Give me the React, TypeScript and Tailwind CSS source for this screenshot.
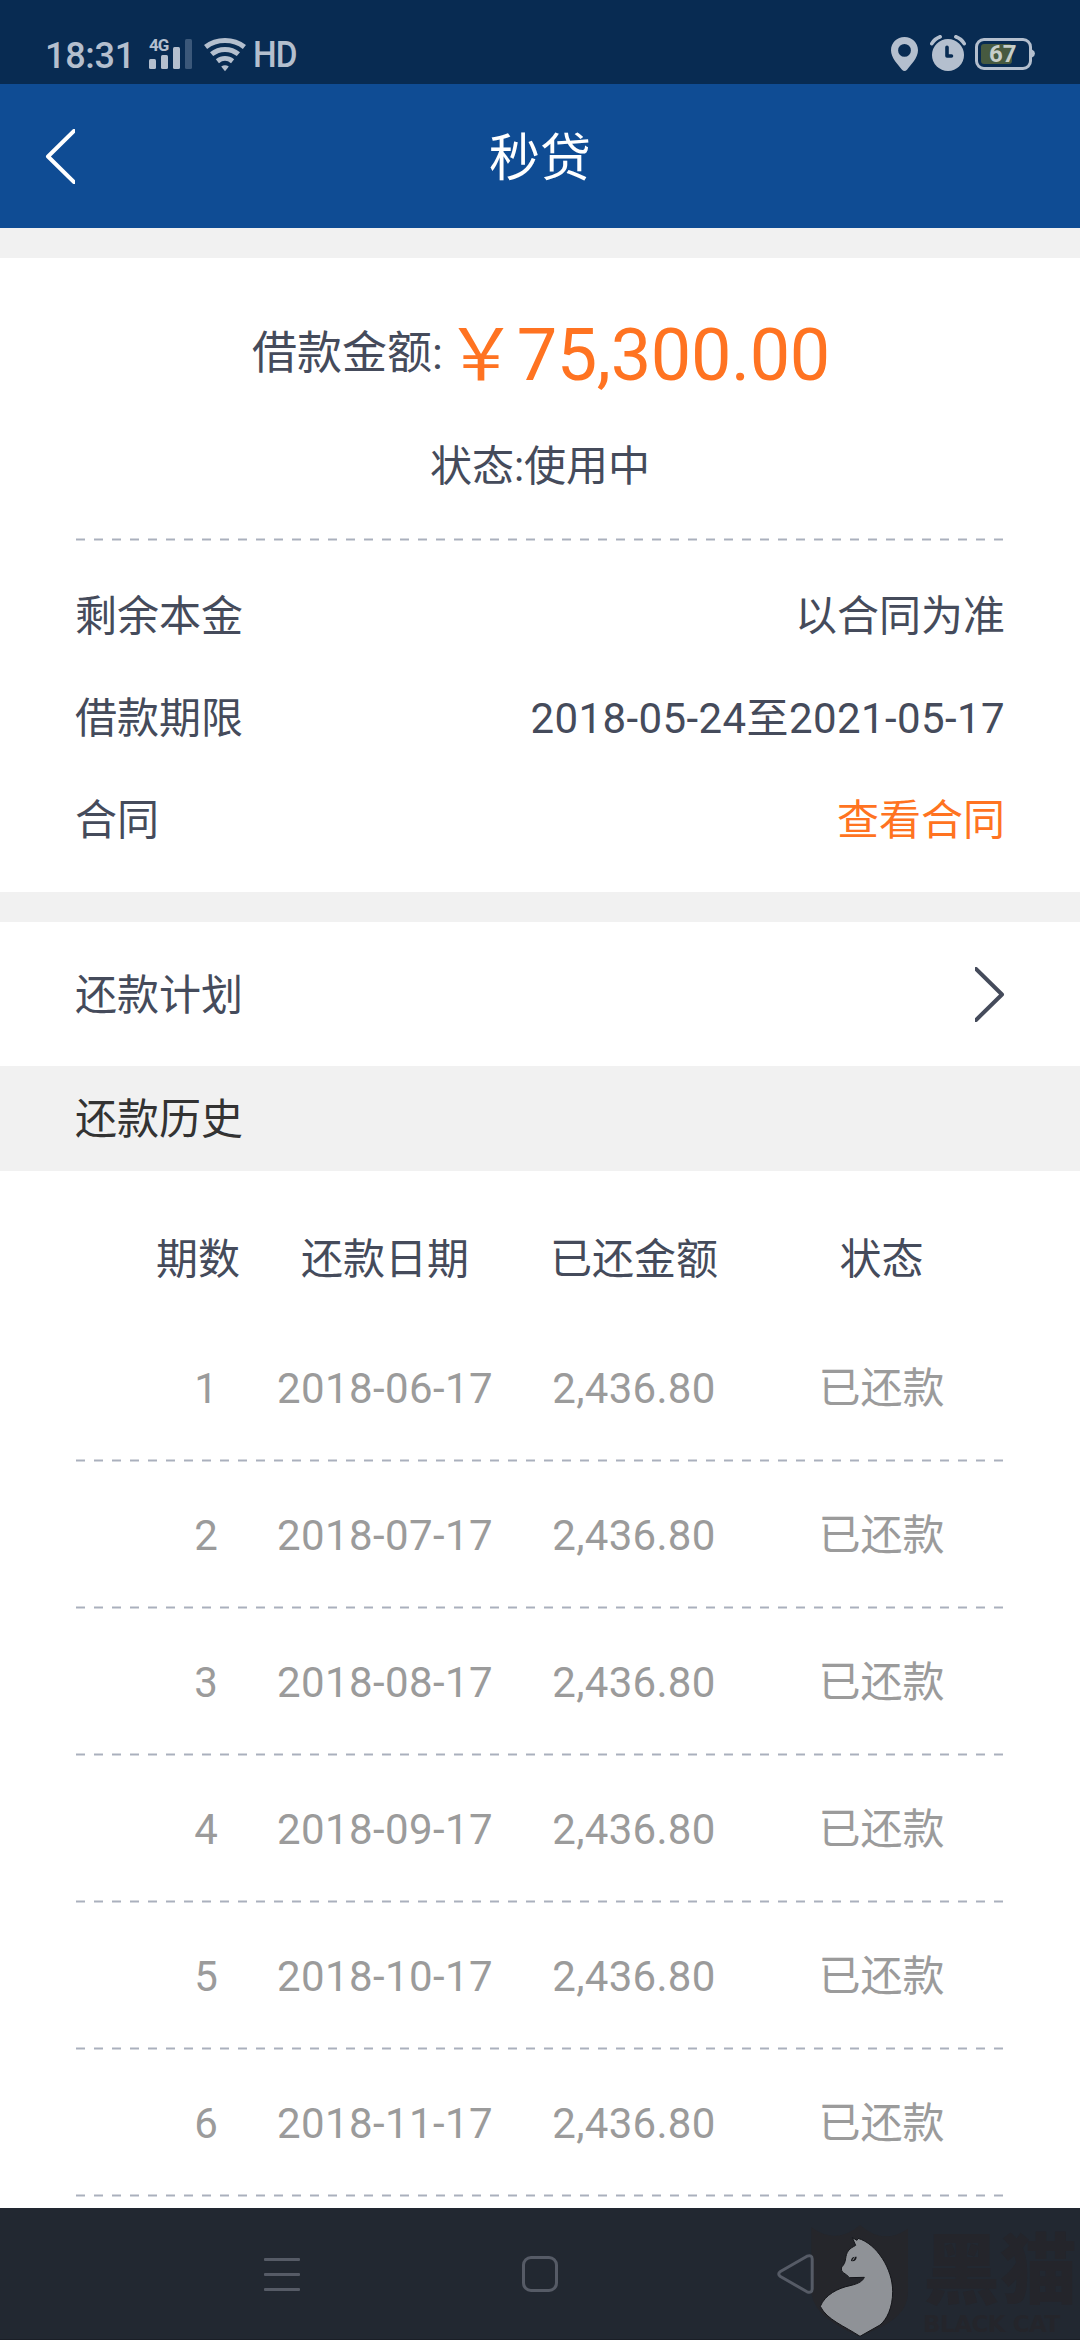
import React from "react";

const history = [
  { no: 1, date: "2018-06-17", amount: "2,436.80", status: "已还款" },
  { no: 2, date: "2018-07-17", amount: "2,436.80", status: "已还款" },
  { no: 3, date: "2018-08-17", amount: "2,436.80", status: "已还款" },
  { no: 4, date: "2018-09-17", amount: "2,436.80", status: "已还款" },
  { no: 5, date: "2018-10-17", amount: "2,436.80", status: "已还款" },
  { no: 6, date: "2018-11-17", amount: "2,436.80", status: "已还款" },
];

// 9px dash, 9px gap, soft top and bottom edge
function Dashed() {
  const dash =
    "h-px bg-[repeating-linear-gradient(90deg,var(--c)_0_9px,transparent_9px_18px)]";
  return (
    <div className="ml-px w-[928px]">
      <div className={`${dash} [--c:#d5d8de]`} />
      <div className={`${dash} [--c:#aab0bd]`} />
      <div className={`${dash} [--c:#d5d8de]`} />
    </div>
  );
}

function StatusBar() {
  return (
    <div className="flex h-[84px] shrink-0 items-start justify-between bg-[#082b52] pl-[45px] pr-[45px] text-[#b4bfce]">
      <div className="flex">
        <div className="mt-[35px] w-[104px] text-[36px] font-medium leading-[42px] tracking-[-0.3px]">18:31</div>
        <div className="relative mt-[39px] h-[30px] w-[55px]">
          <span className="absolute left-0 -top-[2px] text-[17px] font-bold leading-4 tracking-[-1px]">4G</span>
          <svg width="44" height="30" viewBox="0 0 44 30" fill="currentColor">
            <rect x="0" y="20" width="7" height="10" rx="1.5" />
            <rect x="12" y="16" width="7" height="14" rx="1.5" />
            <rect x="24" y="8" width="7" height="22" rx="1.5" />
            <rect x="36" y="0" width="7" height="30" rx="1.5" fill="#3b587a" />
          </svg>
        </div>
        <svg className="mt-[37px]" width="42" height="35" viewBox="0 0 42 35" fill="none" stroke="currentColor" strokeWidth="5">
          <path d="M1.600 10C12.500 1.300 29.500 1.300 40.400 10" />
          <path d="M7.600 17.200C15.300 10.800 26.700 10.800 34.400 17.200" />
          <path d="M13.400 24.200C18 20.500 24 20.500 28.600 24.200" />
          <path d="M17.200 29.500Q21 27 24.800 29.500L21 34.300Z" fill="currentColor" stroke="none" />
        </svg>
        <div className="ml-[7px] mt-[34px] origin-left scale-x-[0.9] text-[37px] font-medium leading-[42px] tracking-[-1px]">HD</div>
      </div>
      <div className="flex">
        <svg className="mt-[37px]" width="27" height="34" viewBox="0 0 27 34" fill="currentColor" fillRule="evenodd">
          <path d="M13.500 0C6 0 0 5.800 0 13.200C0 21 7 27.500 11 32.700Q13.500 35.200 16 32.700C20 27.500 27 21 27 13.200C27 5.800 21 0 13.500 0ZM13.500 7A6.400 6.400 0 1 1 13.500 19.800A6.400 6.400 0 1 1 13.500 7Z" />
        </svg>
        <svg className="ml-3 mt-[35px]" width="36" height="36" viewBox="0 0 36 36" fill="none">
          <circle cx="18" cy="20" r="16" fill="currentColor" />
          <path d="M1.800 8.600Q4.500 4 10.200 1.800M25.800 1.800Q31.500 4 34.200 8.600" stroke="currentColor" strokeWidth="3.600" strokeLinecap="round" />
          <path d="M17 12.300V21H21.500" stroke="#082b52" strokeWidth="3.600" strokeLinecap="round" strokeLinejoin="round" />
        </svg>
        <div className="relative ml-[9px] mt-[38px] h-8 w-[60px]">
          <svg width="60" height="32" viewBox="0 0 60 32" fill="none">
            <rect x="1.500" y="1.500" width="54" height="29" rx="7.500" stroke="currentColor" strokeWidth="3" />
            <path d="M57 11.500Q60 13 60 15.500Q60 18 57 19.500Z" fill="currentColor" />
            <rect x="6" y="6" width="31" height="20" rx="3" fill="#475a40" />
          </svg>
          <span className="absolute left-[14px] top-[2px] text-[24px] font-bold leading-7 text-[#c6cec9]">67</span>
        </div>
      </div>
    </div>
  );
}

function BottomBar() {
  return (
    <div className="relative flex h-[132px] shrink-0 border-b border-[#1a1e26] bg-[#222831] text-[#565b66]">
      <svg className="ml-[264px] mt-[50px]" width="36" height="33" viewBox="0 0 36 33" fill="currentColor">
        <rect width="36" height="3" rx="1" />
        <rect y="15" width="36" height="3" rx="1" />
        <rect y="30" width="36" height="3" rx="1" />
      </svg>
      <div className="ml-[222px] mt-12 size-9 rounded-[9px] border-[3px] border-[#565b66]" />
      <svg className="relative z-10 ml-[219px] mt-[46px]" width="37" height="40" viewBox="0 0 37 40" fill="none" stroke="currentColor" strokeWidth="3" strokeLinejoin="round">
        <path d="M3 17.800L30 2.200Q35 0.500 35.200 5V35Q35 39.500 30 37.800L3 22.200Q0.500 20 3 17.800Z" />
      </svg>
      {/* watermark */}
      <div className="absolute bottom-0 right-0 flex h-[116px] w-[270px] text-[#24252b]">
        <svg className="shrink-0" width="100" height="115" viewBox="150 130 300 345">
          <path d="M154 143Q230 198 300 136Q370 198 444 147V335C444 410 375 440 300 470C225 440 154 395 154 330Z" fill="#25262b" />
          <path d="M277 174L291 182L294 176C350 192 398 268 398 335C398 385 380 420 360 436L300 470C255 440 200 420 181 380C195 345 235 325 270 318C300 311 308 303 313 293L268 294C258 280 240 280 245 262C260 248 254 235 262 218C268 206 278 203 287 197Z" fill="#8f9297" stroke="#15161a" strokeWidth="3" />
          <path d="M273 244Q273 230 290 231Q289 247 273 244Z" fill="#15161a" />
          <path d="M278 242L284 233" stroke="#8f9297" strokeWidth="3" />
        </svg>
        <div className="ml-[13px] flex flex-col">
          <div className="mt-[3px] h-[78px] whitespace-nowrap font-['Noto_Sans_CJK_SC',sans-serif] text-[77px] font-black leading-[78px]">黑猫</div>
          <div className="mt-[6px] whitespace-nowrap font-['DejaVu_Sans',sans-serif] text-[23px] font-bold leading-[28px] tracking-[-0.5px]">BLACK CAT</div>
        </div>
      </div>
    </div>
  );
}

export default function App() {
  return (
    <main className="flex h-[2340px] w-[1080px] flex-col overflow-hidden bg-white font-[Roboto,'Noto_Sans_CJK_SC',sans-serif] text-[42px] leading-[60px] text-[#454b5b]">
      <StatusBar />
      <div className="relative flex h-36 shrink-0 items-center justify-center bg-[#0f4c94] pt-[5px] text-[51px] text-white">
        <svg className="absolute left-[45px] top-[45px]" width="30" height="55" viewBox="0 0 30 55" fill="none" stroke="currentColor" strokeWidth="4">
          <path d="M29 2L3 27.500L29 53" strokeLinecap="round" strokeLinejoin="round" />
        </svg>
        秒贷
      </div>

      <section className="h-[694px] shrink-0 border-y-[30px] border-[#f1f1f1] px-[75px]">
        <div className="mt-[53px] flex h-[90px] items-center justify-center whitespace-nowrap pl-[2px] leading-[90px]">
          <span className="-mt-[5px] text-[45px]">借款金额:</span>
          <span className="ml-[2px] text-[72px] tracking-[-0.35px] text-[#ff7321]">￥75,300.00</span>
        </div>
        <div className="mt-[36px] text-center">状态:使用中</div>
        <div className="mt-[41px]">
          <Dashed />
        </div>
        <div className="mt-[46px] flex flex-col gap-[42px]">
          <div className="flex justify-between"><span>剩余本金</span><span>以合同为准</span></div>
          <div className="flex justify-between"><span>借款期限</span><span className="tracking-[0.4px]">2018-05-24至2021-05-17</span></div>
          <div className="flex justify-between"><span>合同</span><span className="text-[#ff7321]">查看合同</span></div>
        </div>
      </section>

      <div className="flex h-36 shrink-0 items-center justify-between px-[75px]">
        <span className="pt-[3px]">还款计划</span>
        <svg width="30" height="55" viewBox="0 0 30 55" fill="none" stroke="currentColor" strokeWidth="4">
          <path d="M1 2L27 27.500L1 53" strokeLinecap="round" strokeLinejoin="round" />
        </svg>
      </div>
      <div className="flex h-[105px] shrink-0 items-center bg-[#f1f1f1] px-[75px] pt-[3px] text-[#333333]">还款历史</div>

      <section className="h-[1037px] shrink-0 px-[75px] pt-[30px]">
        <div className="grid h-[114px] grid-cols-[185px_250px_248px_247px] items-center pt-[3px] text-center">
          <div className="pl-[61px]">期数</div>
          <div>还款日期</div>
          <div>已还金额</div>
          <div>状态</div>
        </div>
        {history.map((item) => {
          return (
            <div key={item.no} className="text-[#9b9b9b]">
              <div className="grid h-36 grid-cols-[185px_250px_248px_247px] items-center pt-[3px] text-center">
                <div className="pl-[77px]">{item.no}</div>
                <div className="tracking-[0.4px]">{item.date}</div>
                <div className="tracking-[0.3px]">{item.amount}</div>
                <div>{item.status}</div>
              </div>
              <Dashed />
            </div>
          );
        })}
      </section>
      <BottomBar />
    </main>
  );
}
